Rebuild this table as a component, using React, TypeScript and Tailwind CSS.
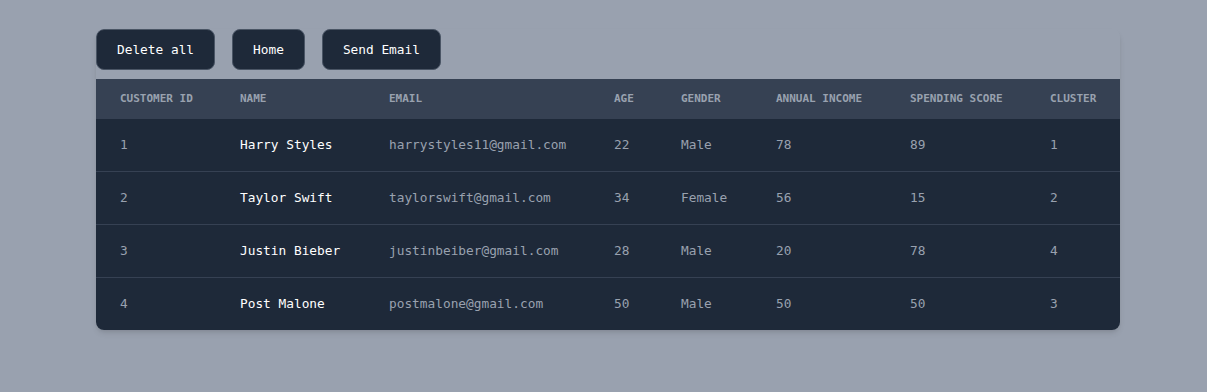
const customers = [
  { id: 1, name: 'Harry Styles', email: 'harrystyles11@gmail.com', age: 22, gender: 'Male', income: 78, score: 89, cluster: 1 },
  { id: 2, name: 'Taylor Swift', email: 'taylorswift@gmail.com', age: 34, gender: 'Female', income: 56, score: 15, cluster: 2 },
  { id: 3, name: 'Justin Bieber', email: 'justinbeiber@gmail.com', age: 28, gender: 'Male', income: 20, score: 78, cluster: 4 },
  { id: 4, name: 'Post Malone', email: 'postmalone@gmail.com', age: 50, gender: 'Male', income: 50, score: 50, cluster: 3 },
];

const columns = [
  { label: 'Customer ID', width: 'w-[120px]' },
  { label: 'Name', width: 'w-[149px]' },
  { label: 'Email', width: 'w-[225px]' },
  { label: 'Age', width: 'w-[67px]' },
  { label: 'Gender', width: 'w-[95px]' },
  { label: 'Annual Income', width: 'w-[134px]' },
  { label: 'Spending Score', width: 'w-[140px]' },
  { label: 'Cluster', width: 'w-[94px]' },
];

const mono = "font-['DejaVu_Sans_Mono',monospace]";

function ActionButton({ children }: { children: React.ReactNode }) {
  return (
    <button className="h-[41px] px-5 rounded-lg border border-gray-600 bg-gray-800 text-white text-[12.8px] leading-5 whitespace-nowrap">
      {children}
    </button>
  );
}

export default function App() {
  return (
    <div className={`min-h-screen bg-gray-400 pt-[29px] ${mono}`}>
      <div className="ml-[96px] w-[1024px] shadow-md rounded-lg overflow-hidden">
        {/* Actions */}
        <div className="flex gap-[17px] mb-[9px]">
          <ActionButton>Delete all</ActionButton>
          <ActionButton>Home</ActionButton>
          <ActionButton>Send Email</ActionButton>
        </div>

        {/* Customers table */}
        <table className="w-full table-fixed text-left text-[12.8px] text-gray-400">
          <thead className="bg-gray-700 text-[11px] uppercase text-gray-400">
            <tr>
              {columns.map((col) => (
                <th key={col.label} className={`${col.width} px-6 py-3 font-bold leading-4 whitespace-nowrap`}>
                  {col.label}
                </th>
              ))}
            </tr>
          </thead>
          <tbody>
            {customers.map((c, i) => (
              <tr
                key={c.id}
                className={`bg-gray-800 ${i < customers.length - 1 ? 'border-b border-gray-700' : ''}`}
              >
                <td className="px-6 py-4 leading-5">{c.id}</td>
                <td className="px-6 py-4 leading-5 font-medium text-white whitespace-nowrap">{c.name}</td>
                <td className="px-6 py-4 leading-5 whitespace-nowrap">{c.email}</td>
                <td className="px-6 py-4 leading-5">{c.age}</td>
                <td className="px-6 py-4 leading-5">{c.gender}</td>
                <td className="px-6 py-4 leading-5">{c.income}</td>
                <td className="px-6 py-4 leading-5">{c.score}</td>
                <td className="px-6 py-4 leading-5">{c.cluster}</td>
              </tr>
            ))}
          </tbody>
        </table>
      </div>
    </div>
  );
}
